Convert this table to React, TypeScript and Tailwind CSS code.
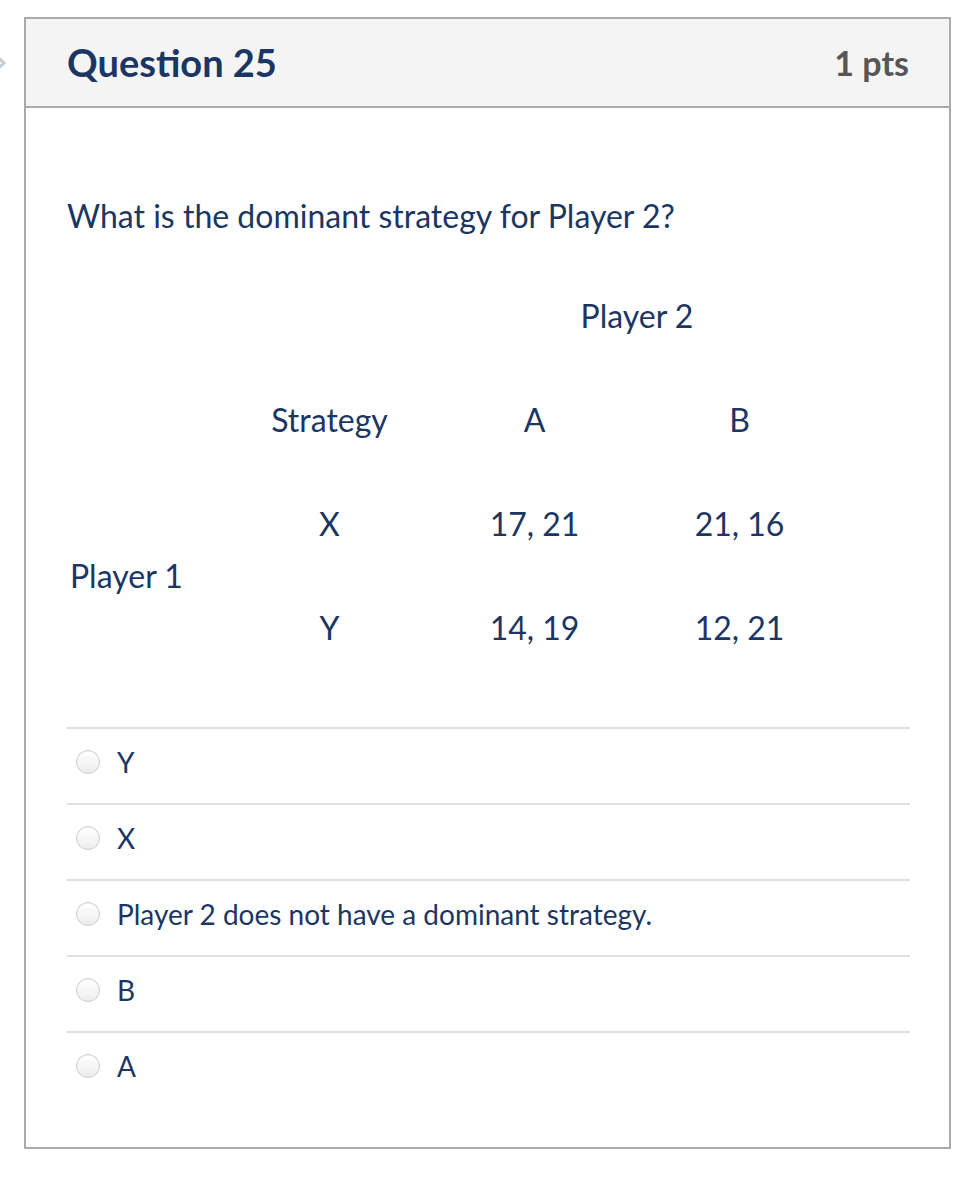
const options = ["Y", "X", "Player 2 does not have a dominant strategy.", "B", "A"];

const payoffs = [
  { label: "X", a: "17, 21", b: "21, 16" },
  { label: "Y", a: "14, 19", b: "12, 21" },
];

const Radio = () => (
  <span className="w-6 h-6 shrink-0 rounded-full border border-[#cccccc] bg-gradient-to-b from-white to-[#ededed] shadow-[inset_0_1px_1px_rgba(0,0,0,0.04)]" />
);

export default function App() {
  return (
    <div className="relative min-h-[1182px] bg-white pt-[17px] pl-[24px] font-['Lato',sans-serif] text-[#1c3664]">
      {/* side marker, clipped at window edge */}
      <svg className="absolute left-[-10px] top-[50px]" width="18" height="26" viewBox="0 0 18 26">
        <path d="M2 2 L14 13 L2 24" fill="none" stroke="#c3ccd6" strokeWidth="3" />
      </svg>

      <div className="w-[927px] border-2 border-[#aaaaaa]">
        <div className="h-[89px] bg-[#f4f4f4] border-b-2 border-[#aaaaaa] flex items-center justify-between pl-[41px] pr-[40px]">
          <h2 className="text-[38px] font-bold">Question 25</h2>
          <span className="text-[34px] font-bold text-[#565656]">1 pts</span>
        </div>

        <div className="pl-[41px] pr-[39px] pt-[88px] pb-[40px]">
          <p className="text-[32px] leading-[40px]">What is the dominant strategy for Player 2?</p>

          <div className="mt-[28px] grid grid-cols-[160px_205px_205px_205px] grid-rows-[104px_104px_104px_104px] text-[32px] items-center">
            <div />
            <div />
            <div className="col-span-2 text-center">Player 2</div>

            <div />
            <div className="text-center">Strategy</div>
            <div className="text-center">A</div>
            <div className="text-center">B</div>

            <div className="row-span-2 pl-[3px]">Player 1</div>
            {payoffs.map((r) => (
              <>
                <div key={r.label} className="text-center">{r.label}</div>
                <div className="text-center">{r.a}</div>
                <div className="text-center">{r.b}</div>
              </>
            ))}
          </div>

          <div className="mt-[47px]">
            {options.map((o) => (
              <div key={o} className="h-[76px] border-t-2 border-[#e0e0e0] flex items-center gap-[17px] pl-[9px] pb-[8px] text-[28px]">
                <Radio />
                <span>{o}</span>
              </div>
            ))}
          </div>
        </div>
      </div>
    </div>
  );
}
